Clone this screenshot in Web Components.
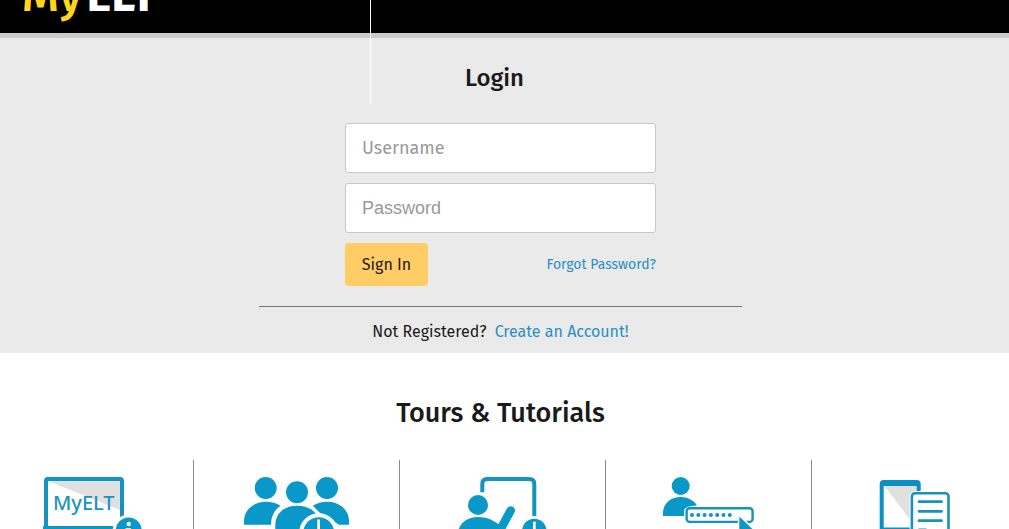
<!DOCTYPE html>
<html lang="en">
<head>
<meta charset="utf-8">
<meta name="viewport" content="width=device-width, initial-scale=1">
<title>MyELT</title>
<style>
  body {
    margin: 0;
    background: #fff;
    color: #1a1a1a;
    font-family: "Fira Sans", "Noto Sans", sans-serif;
    font-size: 16px;
  }
</style>
</head>
<body>
<elt-page>
  <elt-header slot="header"></elt-header>
  <elt-login heading="Login">
    <elt-field type="text" name="username" label="Username"></elt-field>
    <elt-field type="password" name="password" label="Password"></elt-field>
  </elt-login>
  <elt-tours heading="Tours &amp; Tutorials">
    <elt-tour>
      <svg viewBox="-10 0 141 59" role="img" aria-label="MyELT overview">
        <path d="M18 11H90V40Z" fill="#e0e0e0"/>
        <rect x="16" y="9" width="76" height="60" rx="2" fill="none" stroke="#1592bd" stroke-width="4"/>
        <path d="M13 56H100V62H13Z" fill="#0a98c9"/>
        <text x="23" y="40" font-family="Noto Sans, sans-serif" font-size="20" font-weight="500" fill="#1b93be">MyELT</text>
        <circle cx="98.7" cy="60.5" r="14.5" fill="#0a98c9" stroke="#fff" stroke-width="3"/>
        <circle cx="98.7" cy="54" r="2.2" fill="#fff"/>
        <path d="M95.5 58.2H101V64H95.5Z" fill="#fff"/>
      </svg>
    </elt-tour>
    <elt-tour>
      <svg viewBox="-10 0 141 59" role="img" aria-label="Classes" fill="#0a98c9">
        <circle cx="29.7" cy="18" r="11"/>
        <circle cx="91" cy="18" r="11"/>
        <circle cx="61" cy="22.3" r="11"/>
        <path d="M8 54.7V51C8 40 17.5 31.7 29.7 31.7C35.5 31.7 40.5 33 44.5 35.7C38.5 40 35.2 46 35 54.7Z"/>
        <path d="M113 54.7V51C113 40 103.5 31.7 91.3 31.7C86 31.7 81 33 76.8 35.7L84 43L103 54.7Z"/>
        <path d="M39.3 62V55C39.3 43.5 48 35.7 61 35.7C74 35.7 84 43.5 84 55V62Z"/>
        <circle cx="82.7" cy="62.8" r="17.5" stroke="#fff" stroke-width="4"/>
        <path d="M81.3 49.5H84V62H81.3Z" fill="#fff"/>
      </svg>
    </elt-tour>
    <elt-tour>
      <svg viewBox="-9 0 141 59" role="img" aria-label="Teaching" fill="#0a98c9">
        <path d="M41.3 22.3V14Q41.3 9 46.3 9H88.3Q93.3 9 93.3 14V46" fill="none" stroke="#1592bd" stroke-width="4"/>
        <circle cx="37" cy="35" r="10"/>
        <path d="M17 62C19 52 27 47 37 47C46 47 52 50 58 54.5L62 62Z"/>
        <path d="M69.7 40.5L58 62" stroke="#0a98c9" stroke-width="8.6" stroke-linecap="round"/>
        <circle cx="93.3" cy="61" r="12.3"/>
        <path d="M92 51.7H94.7V60H92Z" fill="#fff"/>
      </svg>
    </elt-tour>
    <elt-tour>
      <svg viewBox="-5 0 141 59" role="img" aria-label="Registration" fill="#0a98c9">
        <circle cx="37.7" cy="16" r="9"/>
        <path d="M20 46V43C20 33.5 27.5 27 37.7 27C44.5 27 50.5 30 54 35.5Q41 36 41 41V46Z"/>
        <rect x="43.6" y="38.3" width="66" height="13.6" rx="3" fill="#fff" stroke="#1592bd" stroke-width="2.4"/>
        <path d="M49 45H87" stroke="#1592bd" stroke-width="4" stroke-linecap="round" stroke-dasharray="0 6.3"/>
        <path d="M96.3 46.5L112 61H96.3Z" stroke="#fff" stroke-width="3" fill="#fff"/>
        <path d="M96.3 46.5L111.5 61H96.3Z"/>
      </svg>
    </elt-tour>
    <elt-tour>
      <svg viewBox="23 0 141 59" role="img" aria-label="Mobile documents">
        <path d="M58.7 62V14Q58.7 10 62.7 10H95.7Q99.7 10 99.7 14V62Z" fill="#0a90c4"/>
        <path d="M62.7 16H95.4V57.5H62.7Z" fill="#fff"/>
        <path d="M63.5 16H95.4V58Z" fill="#e0e0e0"/>
        <rect x="90.9" y="23.2" width="36.6" height="42" rx="3" fill="#fff" stroke="#fff" stroke-width="4.5"/>
        <rect x="90.9" y="23.2" width="36.6" height="42" rx="3" fill="#fff" stroke="#1592bd" stroke-width="2.6"/>
        <path d="M98 31.7H120.5M98 41.3H120.5M98 50.7H120.5M98 60H105" stroke="#1592bd" stroke-width="2.8" stroke-linecap="round"/>
      </svg>
    </elt-tour>
  </elt-tours>
</elt-page>

<script>
class Page extends HTMLElement {
  constructor() {
    super()
    this.attachShadow({ mode: 'open' }).innerHTML = `
      <style>
        :host {
          display: flex;
          flex-direction: column;
          min-height: 100vh;
          position: relative;
          overflow: hidden;
        }

        main {
          display: flex;
          flex: 1;
          flex-direction: column;
        }

        /* thin rule hanging from the header over the login panel */
        .rule {
          position: absolute;
          top: 0;
          left: 370px;
          width: 1px;
          height: 104px;
          background: #fff;
        }
      </style>
      <slot name="header"></slot>
      <main><slot></slot></main>
      <div class="rule"></div>
    `
  }
}

class Header extends HTMLElement {
  constructor() {
    super()
    this.attachShadow({ mode: 'open' }).innerHTML = `
      <style>
        :host {
          display: block;
          background: #000;
          border-bottom: 5px solid #ccc;
        }

        header {
          display: flex;
          align-items: flex-end;
          height: 33px;
          padding: 0 22px;
          overflow: hidden;
        }

        a {
          display: flex;
          gap: 4px;
          color: #fff;
          font-size: 47px;
          font-weight: 700;
          line-height: 76px;
          text-decoration: none;
        }

        em {
          color: #ffd51e;
          font-style: normal;
          font-weight: 500;
        }
      </style>
      <header><a href="#"><em>My</em><span>ELT</span></a></header>
    `
  }
}

class Login extends HTMLElement {
  constructor() {
    super()
    this.attachShadow({ mode: 'open' }).innerHTML = `
      <style>
        :host {
          display: block;
          background: #eaeaea;
          padding: 24px 8px 9px 0;
        }

        h1 {
          margin: 0 0 29px;
          padding-right: 12px;
          font-size: 24px;
          font-weight: 500;
          line-height: 32px;
          text-align: center;
        }

        form {
          display: flex;
          flex-direction: column;
          gap: 10px;
          box-sizing: border-box;
          width: 100%;
          max-width: 311px;
          margin: 0 auto;
        }

        .actions {
          display: flex;
          align-items: center;
          justify-content: space-between;
        }

        button {
          min-width: 83px;
          height: 43px;
          padding: 0 16px;
          border: 0;
          border-radius: 4px;
          background: #ffcc66;
          color: #1a1a1a;
          font: inherit;
          font-size: 16px;
        }

        a {
          color: #2a8fc4;
          text-decoration: none;
        }

        .actions a {
          font-size: 14px;
        }

        hr {
          max-width: 483px;
          height: 1px;
          margin: 20px auto 13px;
          border: 0;
          background: #777;
        }

        p {
          display: flex;
          justify-content: center;
          gap: 8px;
          margin: 0;
          font-size: 16px;
          line-height: 24px;
        }
      </style>
      <h1></h1>
      <form>
        <slot></slot>
        <div class="actions">
          <button type="button">Sign In</button>
          <a href="#">Forgot Password?</a>
        </div>
      </form>
      <hr>
      <p><span>Not Registered?</span><a href="#">Create an Account!</a></p>
    `
  }

  connectedCallback() {
    this.shadowRoot.querySelector('h1').textContent = this.getAttribute('heading')
  }
}

class Field extends HTMLElement {
  constructor() {
    super()
    this.attachShadow({ mode: 'open' }).innerHTML = `
      <style>
        :host {
          display: block;
        }

        input {
          display: block;
          box-sizing: border-box;
          width: 100%;
          height: 50px;
          padding: 0 16px;
          border: 1px solid #c8c8c8;
          border-radius: 3px;
          background: #fff;
          color: #1a1a1a;
          font: inherit;
          font-size: 18px;
        }

        input[type=password] {
          font-family: "Liberation Sans", Arial, sans-serif;
        }

        input::placeholder {
          color: #999;
        }
      </style>
      <input>
    `
  }

  connectedCallback() {
    const input = this.shadowRoot.querySelector('input')
    input.type = this.getAttribute('type')
    input.name = this.getAttribute('name')
    input.placeholder = this.getAttribute('label')
    input.setAttribute('aria-label', this.getAttribute('label'))
  }
}

class Tours extends HTMLElement {
  constructor() {
    super()
    this.attachShadow({ mode: 'open' }).innerHTML = `
      <style>
        :host {
          display: flex;
          flex: 1;
          flex-direction: column;
          padding-top: 42px;
        }

        h2 {
          margin: 0 0 29px;
          padding-right: 8px;
          font-size: 27px;
          font-weight: 500;
          line-height: 36px;
          text-align: center;
        }

        .grid {
          display: grid;
          flex: 1;
          grid-template-columns: repeat(5, 1fr);
          margin: 0 -9px 0 -12px;
        }
      </style>
      <h2></h2>
      <div class="grid"><slot></slot></div>
    `
  }

  connectedCallback() {
    this.shadowRoot.querySelector('h2').textContent = this.getAttribute('heading')
  }
}

class Tour extends HTMLElement {
  constructor() {
    super()
    this.attachShadow({ mode: 'open' }).innerHTML = `
      <style>
        :host {
          display: flex;
          align-items: flex-start;
          justify-content: center;
          padding-top: 10px;
          border-right: 1px solid #8a8a8a;
        }

        ::slotted(svg) {
          width: 141px;
          height: 59px;
        }
      </style>
      <slot></slot>
    `
  }
}

customElements.define('elt-page', Page)
customElements.define('elt-header', Header)
customElements.define('elt-login', Login)
customElements.define('elt-field', Field)
customElements.define('elt-tours', Tours)
customElements.define('elt-tour', Tour)
</script>
</body>
</html>
